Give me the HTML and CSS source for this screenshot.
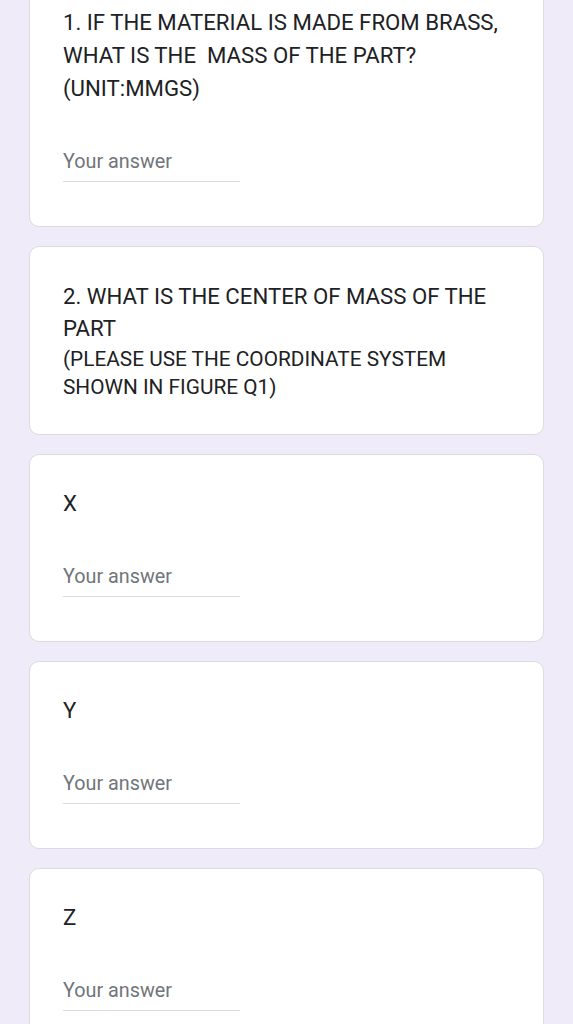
FILE: index.html
```html
<!DOCTYPE html>
<html>
<head>
<meta charset="utf-8">
<link rel="stylesheet" href="styles.css">
</head>
<body>
<main class="form">
  <section class="card card-first">
    <div class="title">1. IF THE MATERIAL IS MADE FROM BRASS, WHAT IS THE&nbsp; MASS OF THE PART?<br>(UNIT:MMGS)</div>
    <div class="answer"><span class="placeholder">Your answer</span></div>
  </section>
  <section class="card card-info">
    <div class="title">2. WHAT IS THE CENTER OF MASS OF THE PART</div>
    <div class="desc">(PLEASE USE THE COORDINATE SYSTEM SHOWN IN FIGURE Q1)</div>
  </section>
  <section class="card">
    <div class="title">X</div>
    <div class="answer"><span class="placeholder">Your answer</span></div>
  </section>
  <section class="card">
    <div class="title">Y</div>
    <div class="answer"><span class="placeholder">Your answer</span></div>
  </section>
  <section class="card">
    <div class="title">Z</div>
    <div class="answer"><span class="placeholder">Your answer</span></div>
  </section>
</main>
</body>
</html>
```
FILE: styles.css
```css
html, body {
  margin: 0;
  padding: 0;
  background: #f0ebf8;
  font-family: Roboto, "Liberation Sans", sans-serif;
  color: #202124;
  overflow: hidden;
}
.form {
  display: flex;
  flex-direction: column;
  gap: 19px;
  padding: 0 29px;
}
.card {
  background: #fff;
  border: 1px solid #dadce0;
  border-radius: 10px;
  padding: 31.5px 33px 44px 33px;
}
.card-first {
  margin-top: -27px;
}
.card-info {
  padding-top: 33px;
  padding-bottom: 33px;
}
.title {
  font-size: 22.2px;
  line-height: 33px;
  max-width: 450px;
}
.card-info .title {
  line-height: 32px;
}
.desc {
  margin-top: 1px;
  font-size: 20.8px;
  line-height: 28px;
  max-width: 420px;
}
.answer {
  margin-top: 44.5px;
  width: 177px;
  padding-bottom: 6px;
  border-bottom: 1px solid #dadce0;
}
.placeholder {
  display: block;
  font-size: 19.8px;
  line-height: 26px;
  color: #70757a;
}
```
